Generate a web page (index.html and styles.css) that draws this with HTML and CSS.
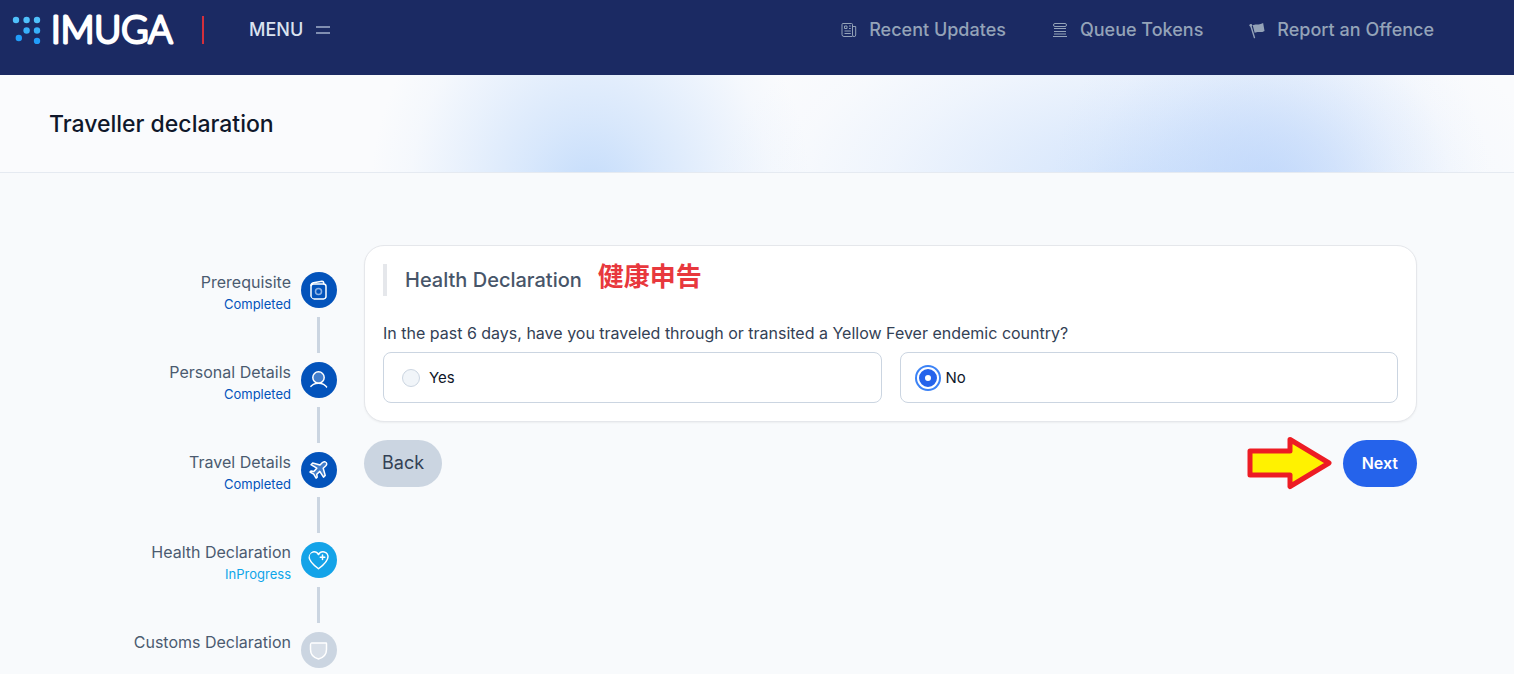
FILE: index.html
```html
<!DOCTYPE html>
<html lang="en">
<head>
  <meta charset="UTF-8">
  <meta name="viewport" content="width=device-width, initial-scale=1">
  <title>IMUGA - Traveller declaration</title>
  <link rel="stylesheet" href="styles.css">
</head>
<body>
  <header class="topbar">
    <a class="logo" href="#">
      <svg width="29" height="28" viewBox="0 0 29 28" aria-hidden="true">
        <g fill="#4fc0fb">
          <circle cx="4" cy="4" r="3.2"/>
          <circle cx="14.600" cy="4" r="3.2"/>
          <circle cx="25" cy="4" r="3.2"/>
        </g>
        <g fill="#38b0fa">
          <circle cx="14.600" cy="14.500" r="3.2"/>
          <circle cx="25" cy="14.500" r="3.2"/>
        </g>
        <g fill="#219dfa">
          <circle cx="6.800" cy="22" r="3.2"/>
          <circle cx="25" cy="25" r="3.2"/>
        </g>
      </svg>
      <svg class="logo-text" width="130" height="50" viewBox="0 0 130 50"><text x="0" y="38">IMUGA</text></svg>
    </a>
    <span class="divider"></span>
    <button type="button" class="menu-btn">MENU
      <svg width="14" height="8" viewBox="0 0 14 8" aria-hidden="true"><path d="M0 1h14M0 7h14" stroke="#a3b0cb" stroke-width="1.500"/></svg>
    </button>
    <nav class="links">
      <a href="#">
        <svg width="16" height="16" viewBox="0 0 16 16" fill="none" stroke="currentColor" aria-hidden="true">
          <path d="M11.500 14.500H3a2 2 0 0 1-2-2V2.500a1 1 0 0 1 1-1h8.500a1 1 0 0 1 1 1v10.500a1.500 1.500 0 0 0 3.200 0V4.500h-3"/>
          <path d="M3.500 4h2.500v2.500H3.500zM8 4h1.800M8 6.500h1.800M3.500 9h6.300M3.500 11.500h6.300"/>
        </svg>
        Recent Updates
      </a>
      <a href="#">
        <svg width="16" height="16" viewBox="0 0 16 16" fill="none" stroke="currentColor" aria-hidden="true">
          <rect x="1.500" y="1.500" width="13" height="3" rx="1.500"/>
          <path d="M2 6.500h12M2 9.500h12M2 12h12M1 14.500h14"/>
        </svg>
        Queue Tokens
      </a>
      <a href="#">
        <svg width="16" height="17" viewBox="1 0 16 18" fill="currentColor" aria-hidden="true">
          <path d="M4.500 3.500C8 1.500 10 4 15.500 1l1.500 8.500c-4 2.500-6.500 0-10.500 2z"/>
          <path d="M2.300 3.500l4 13" stroke="currentColor" stroke-width="1.500" stroke-linecap="round"/>
          <circle cx="2.500" cy="3.500" r="1.500"/>
        </svg>
        Report an Offence
      </a>
    </nav>
  </header>

  <section class="hero">
    <h1>Traveller declaration</h1>
  </section>

  <main class="page">
    <ol class="steps">
      <li class="done">
        <div class="label">Prerequisite<small>Completed</small></div>
        <span class="dot">
          <svg width="22" height="22" viewBox="0 0 22 22" aria-hidden="true">
            <rect x="3" y="5" width="15" height="15" rx="2.500"/>
            <path d="M3 6.500Q3 4.200 5.500 3.700L14 2.200q1.800 0 1.800 2.500"/>
            <circle class="soft" cx="10.500" cy="12.500" r="3"/>
          </svg>
        </span>
      </li>
      <li class="done">
        <div class="label">Personal Details<small>Completed</small></div>
        <span class="dot">
          <svg width="22" height="22" viewBox="0 0 22 22" aria-hidden="true">
            <circle class="tint" cx="10.500" cy="8.500" r="5.700"/>
            <path d="M1.500 19c2-3 5.300-4.800 9-4.800s7 1.800 9 4.800"/>
          </svg>
        </span>
      </li>
      <li class="done">
        <div class="label">Travel Details<small>Completed</small></div>
        <span class="dot">
          <svg width="22" height="22" viewBox="0 0 22 22" aria-hidden="true">
            <path class="tint" d="M18.200 3.300c-1-1-2.800-.7-4 .5l-2.200 2.200-7.300-2-1.700 1.700 5.800 3.500-3 3.200-2.800-.5-1 1.100 3.700 2.200 2.400 4 1.100-1-.4-2.900 3-2.900 3.700 5.700 1.700-1.700-2-7.200 2.400-2.200c1.200-1.200 1.600-2.700.6-3.700z"/>
          </svg>
        </span>
      </li>
      <li class="current">
        <div class="label">Health Declaration<small>InProgress</small></div>
        <span class="dot">
          <svg width="22" height="22" viewBox="0 0 22 22" aria-hidden="true">
            <path d="M10.500 19.700C6.500 16.700 1 12.700 1 7.700c0-5.500 7-6.500 9.500-2.200 2.500-4.300 9.500-3.300 9.500 2.200 0 5-5.500 9-9.500 12z"/>
            <path d="M14.500 6v4.500M12.300 8.200h4.500"/>
          </svg>
        </span>
      </li>
      <li>
        <div class="label">Customs Declaration</div>
        <span class="dot">
          <svg width="22" height="22" viewBox="0 0 22 22" aria-hidden="true">
            <path class="tint" d="M2.500 4h16v6.500c0 6-4.500 8.500-8 9.500-3.500-1-8-3.500-8-9.500z"/>
          </svg>
        </span>
      </li>
    </ol>

    <form class="content">
      <section class="card">
        <h2>Health Declaration <span class="zh" lang="zh-Hant">健康申告</span></h2>
        <fieldset>
          <legend>In the past 6 days, have you traveled through or transited a Yellow Fever endemic country?</legend>
          <div class="options">
            <label><input type="radio" name="fever" value="yes">Yes</label>
            <label><input type="radio" name="fever" value="no" checked>No</label>
          </div>
        </fieldset>
      </section>
      <div class="actions">
        <button type="button" class="back">Back</button>
        <svg class="arrow" width="86" height="54" viewBox="0 0 86 54" aria-hidden="true">
          <path d="M3 15h40V3.500L82 27 43 50.500V39H3z" fill="#fff200" stroke="#ed1c24" stroke-width="5" stroke-linejoin="round"/>
        </svg>
        <button type="submit" class="next">Next</button>
      </div>
    </form>
  </main>
</body>
</html>
```

FILE: styles.css
```css
*{
  box-sizing: border-box;
  margin: 0;
  padding: 0;
}
body{
  font-family: Inter, "Liberation Sans", sans-serif;
  font-size: 16px;
  line-height: 24px;
  color: #334155;
  background: #f8fafc;
}
a{
  color: inherit;
  text-decoration: none;
}
button{
  font: inherit;
  border: 0;
  cursor: pointer;
}

/* top bar */
.topbar{
  display: flex;
  align-items: center;
  height: 75px;
  padding: 0 80px 15px 12px;
  background: #1b2a63;
}
.logo{
  display: flex;
  align-items: center;
  gap: 10px;
}
.logo-text{
  overflow: visible;
}
.logo-text text{
  font-family: Lato, sans-serif;
  font-size: 37px;
  font-weight: 300;
  fill: #fff;
  stroke: #fff;
  stroke-width: 3px;
  stroke-linejoin: round;
}
.divider{
  width: 2px;
  height: 28px;
  margin: 0 45px 0 21px;
  background: #d32f3c;
}
.menu-btn{
  display: flex;
  align-items: center;
  gap: 13px;
  font-size: 18px;
  font-weight: 500;
  color: #dbe3f0;
  background: none;
}
.links{
  display: flex;
  gap: 46px;
  margin-left: auto;
  font-size: 18px;
  font-weight: 500;
  color: #94a3b8;
}
.links a{
  display: flex;
  align-items: center;
  gap: 12px;
}

/* title strip */
.hero{
  padding: 34px 49px 32px;
  border-bottom: 1px solid #e5eaf1;
  background:
    radial-gradient(ellipse 220px 240px at 39% 120%, #c4dcfb 0%, #c4dcfba0 30%, #c4dcfb50 60%, #c4dcfb18 82%, #c4dcfb00 100%),
    radial-gradient(ellipse 220px 220px at 84% 120%, #a9c9fa90 0%, #a9c9fa60 30%, #a9c9fa28 60%, #a9c9fa0a 82%, #a9c9fa00 100%),
    radial-gradient(ellipse 420px 220px at 75% 120%, #b4d2fb90 0%, #b4d2fb60 30%, #b4d2fb28 60%, #b4d2fb0a 82%, #b4d2fb00 100%),
    #fafbfd;
}
.hero h1{
  font-size: 23px;
  line-height: 31px;
  font-weight: 500;
  color: #0f172a;
}

/* page */
.page{
  display: grid;
  grid-template-columns: 240px 1fr;
  gap: 27px;
  padding: 72px 97px 0;
}
.steps{
  padding-top: 27px;
  list-style: none;
}
.steps li{
  display: flex;
  justify-content: flex-end;
  gap: 10px;
  height: 90px;
  color: #4b5b70;
}
.steps li:last-child{
  height: auto;
}
.label{
  line-height: 21px;
  text-align: right;
}
.label small{
  display: block;
  font-size: 13px;
  line-height: 22px;
}
.done small{
  color: #0353bb;
}
.current small{
  color: #0ea5e9;
}
.dot{
  display: flex;
  flex-direction: column;
  align-items: center;
  width: 36px;
}
.dot svg{
  box-sizing: content-box;
  flex: none;
  padding: 7px;
  border-radius: 50%;
  fill: none;
  stroke: #fff;
  stroke-width: 1.5;
  stroke-linecap: round;
  stroke-linejoin: round;
  background: #cbd5e1;
}
.dot .tint{
  fill: #ffffff40;
}
.dot .soft{
  stroke: #8eb2e4;
}
.done .dot svg{
  background: #0353bb;
}
.current .dot svg{
  background: #14a3e8;
}
/* line down to the next step */
.steps li:not(:last-child) .dot:after{
  content: '';
  width: 3px;
  height: 36px;
  margin: 9px 1px 0 0;
  background: #cbd5e1;
}

.card{
  padding: 18px;
  border: 1px solid #e5e7eb;
  border-radius: 20px;
  background: #fff;
  box-shadow: 0 1px 2px #0000000d;
}
.card h2{
  display: flex;
  gap: 16px;
  padding-left: 18px;
  border-left: 4px solid #e5e7eb;
  font-size: 20px;
  line-height: 32px;
  font-weight: 500;
  color: #475569;
}
.zh{
  font-family: "Noto Sans CJK TC", sans-serif;
  font-size: 26px;
  line-height: 22px;
  font-weight: 700;
  color: #e8383d;
}
fieldset{
  margin-top: 25px;
  border: 0;
}
.options{
  display: grid;
  grid-template-columns: 1fr 1fr;
  gap: 18px;
  padding-top: 7px;
}
.options label{
  display: flex;
  align-items: center;
  gap: 9px;
  height: 51px;
  padding: 0 18px;
  border: 1px solid #cbd5e1;
  border-radius: 8px;
  font-size: 15px;
  color: #0f172a;
}
.options input{
  appearance: none;
  width: 18px;
  height: 18px;
  border: 1px solid #cbd5e1;
  border-radius: 50%;
  background: #f1f5f9;
}
.options input:checked{
  border: 6px solid #2563eb;
  background: #fff;
  box-shadow: 0 0 0 2px #fff, 0 0 0 4px #3b82f6;
}

.actions{
  display: flex;
  align-items: center;
  margin-top: 14px;
}
.back, .next{
  height: 47px;
  padding: 0 18px;
  border-radius: 24px;
}
.back{
  font-size: 18px;
  color: #334155;
  background: #cbd5e1;
}
.next{
  padding: 0 19px;
  font-weight: 600;
  color: #fff;
  background: #2563eb;
}
.arrow{
  margin-left: auto;
  margin-right: 10px;
}
```
